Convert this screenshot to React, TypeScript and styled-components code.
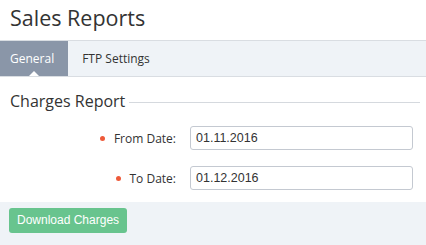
import React from "react";
import styled, { createGlobalStyle } from "styled-components";

const Global = createGlobalStyle`
  html, body { margin: 0; padding: 0; background: #fff; }
  body { font-family: "Open Sans", "Noto Sans", sans-serif; color: #333; }
  * { box-sizing: border-box; }
`;

const Page = styled.div`
  width: 426px;
  height: 245px;
  display: flex;
  flex-direction: column;
  overflow: hidden;
  & > * { flex-shrink: 0; }
`;

const Title = styled.h1`
  margin: 0;
  height: 40px;
  padding: 3px 0 0 10px;
  font-size: 21.5px;
  font-weight: 400;
  line-height: 30px;
  color: #333;
`;

const TabBar = styled.div`
  display: flex;
  height: 37px;
  background: #eff3f7;
  border-top: 1px solid #d9dde2;
  border-bottom: 1px solid #d9dde2;
`;

const Tab = styled.div<{ $active?: boolean }>`
  position: relative;
  display: flex;
  align-items: center;
  padding: 0 14px 0 ${(p) => (p.$active ? "10px" : "14px")};
  font-size: 12px;
  color: ${(p) => (p.$active ? "#fff" : "#333")};
  background: ${(p) => (p.$active ? "#8a96a8" : "transparent")};
  &::after {
    content: "";
    display: ${(p) => (p.$active ? "block" : "none")};
    position: absolute;
    left: 50%;
    bottom: 0;
    transform: translateX(-50%);
    border-left: 5px solid transparent;
    border-right: 5px solid transparent;
    border-bottom: 5px solid #fff;
  }
`;

const Body = styled.div`
  padding: 13px 13px 12px 10px;
`;

const Legend = styled.div`
  display: flex;
  align-items: center;
  gap: 4px;
  font-size: 16px;
  line-height: 22px;
  color: #333;
  margin: 0 -7px 14px 0;
  &::after {
    content: "";
    flex: 1;
    height: 1px;
    background: #d5d9de;
    margin-top: 2px;
  }
`;

const Row = styled.div`
  display: flex;
  align-items: center;
  height: 24px;
  margin-bottom: 16px;
  &:last-child { margin-bottom: 0; }
`;

const Label = styled.label`
  width: 180px;
  display: flex;
  justify-content: flex-end;
  align-items: center;
  padding-right: 14px;
  font-size: 12px;
  color: #333;
  &::before {
    content: "";
    width: 5px;
    height: 5px;
    border-radius: 50%;
    background: #ee5a3a;
    margin-right: 9px;
  }
`;

const Input = styled.input`
  flex: 1;
  height: 24px;
  border: 1px solid #c4c9d1;
  border-radius: 3px;
  padding: 0 5px;
  font-family: "Liberation Sans", Arial, sans-serif;
  font-size: 12.5px;
  color: #333;
  outline: none;
`;

const Footer = styled.div`
  flex: 1;
  background: #eff3f7;
  padding: 5px 9px;
`;

const Button = styled.button`
  height: 25px;
  padding: 0 8px;
  border: none;
  border-radius: 3px;
  background: #68c48e;
  color: #fff;
  font-family: "Liberation Sans", Arial, sans-serif;
  font-size: 12px;
  cursor: pointer;
`;

export default function App() {
  return (
    <Page>
      <Global />
      <Title>Sales Reports</Title>
      <TabBar>
        <Tab $active>General</Tab>
        <Tab>FTP Settings</Tab>
      </TabBar>
      <Body>
        <Legend>Charges Report</Legend>
        <Row>
          <Label>From Date:</Label>
          <Input defaultValue="01.11.2016" />
        </Row>
        <Row>
          <Label>To Date:</Label>
          <Input defaultValue="01.12.2016" />
        </Row>
      </Body>
      <Footer>
        <Button>Download Charges</Button>
      </Footer>
    </Page>
  );
}
